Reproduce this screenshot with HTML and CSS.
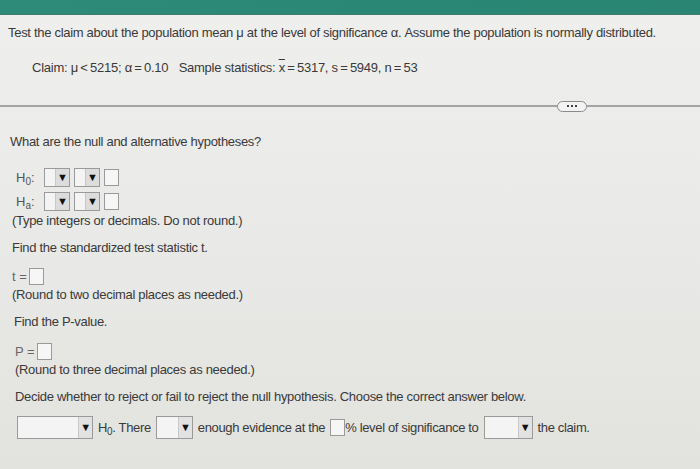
FILE: index.html
```html
<!DOCTYPE html>
<html lang="en">
<head>
<meta charset="UTF-8">
<meta name="viewport" content="width=device-width, initial-scale=1.0">
<title>Hypothesis Test</title>
<link rel="stylesheet" href="styles.css">
</head>
<body>
<div class="topbar"></div>

<div class="question">
    <p class="intro">Test the claim about the population mean <span class="greek">μ</span> at the level of significance <span class="greek">α</span>. Assume the population is normally distributed.</p>
    <p class="claim">Claim: <span class="greek">μ</span>&thinsp;&lt;&thinsp;5215; <span class="greek">α</span>&thinsp;=&thinsp;0.10 <span class="gap"></span>Sample statistics: <span class="xbar">x</span>&thinsp;=&thinsp;5317, s&thinsp;=&thinsp;5949, n&thinsp;=&thinsp;53</p>
</div>

<div class="divider">
    <div class="rule"></div>
    <div class="more"><span></span><span></span><span></span></div>
    <div class="rule short"></div>
</div>

<div class="answer">
    <p class="ask">What are the null and alternative hypotheses?</p>

    <div class="hyp">
        <div class="hyp-row">
            <span class="hyp-label">H<sub>0</sub>:</span>
            <div class="select small"><span class="arrow">▼</span></div>
            <div class="select small"><span class="arrow">▼</span></div>
            <div class="box"></div>
        </div>
        <div class="hyp-row">
            <span class="hyp-label">H<sub>a</sub>:</span>
            <div class="select small"><span class="arrow">▼</span></div>
            <div class="select small"><span class="arrow">▼</span></div>
            <div class="box"></div>
        </div>
    </div>
    <p class="note">(Type integers or decimals. Do not round.)</p>

    <p class="ask find-t">Find the standardized test statistic t.</p>
    <div class="entry t-entry">t = <div class="box"></div></div>
    <p class="note">(Round to two decimal places as needed.)</p>

    <p class="ask find-p">Find the P-value.</p>
    <div class="entry p-entry">P = <div class="box"></div></div>
    <p class="note">(Round to three decimal places as needed.)</p>

    <p class="ask decide">Decide whether to reject or fail to reject the null hypothesis. Choose the correct answer below.</p>
    <div class="sentence">
        <div class="select wide"><span class="arrow">▼</span></div>
        <span>H<sub>0</sub>. There</span>
        <div class="select mid"><span class="arrow">▼</span></div>
        <span>enough evidence at the</span>
        <div class="box pct"></div><span class="tight">% level of significance to</span>
        <div class="select end"><span class="arrow">▼</span></div>
        <span>the claim.</span>
    </div>
</div>
</body>
</html>
```

FILE: styles.css
```css
body {
    margin: 0;
    font-family: "Liberation Sans", Arial, sans-serif;
    font-size: 13px;
    color: #3a3a3a;
    background: linear-gradient(180deg, #efefed 0%, #e8e8e6 60%, #e2e2de 100%);
    width: 700px;
    height: 469px;
    overflow: hidden;
}

p {
    margin: 0;
    line-height: 16px;
}

.topbar {
    height: 14px;
    background: linear-gradient(90deg, #2e8a79 0%, #2b8775 60%, #2a8573 100%);
    border-bottom: 1px solid #3f7d70;
}

.question {
    padding: 10px 0 0 8px;
    height: 75px;
}

.intro {
    letter-spacing: -0.3px;
}

.claim {
    margin-top: 19px;
    margin-left: 24px;
    letter-spacing: -0.25px;
}

.gap {
    display: inline-block;
    width: 7px;
}

.xbar {
    text-decoration: overline;
}

.divider {
    display: flex;
    align-items: center;
    height: 12px;
}

.rule {
    flex: 1;
    height: 2px;
    background: #a4a4a2;
}

.rule.short {
    flex: 0 0 113px;
}

.more {
    width: 28px;
    height: 9px;
    border: 1px solid #8a8a8a;
    border-radius: 6px;
    background: #f3f3f3;
    display: flex;
    justify-content: center;
    align-items: center;
    gap: 2px;
}

.more span {
    width: 2px;
    height: 2px;
    background: #444;
}

.answer {
    padding: 22px 0 0 10px;
}

.ask {
    letter-spacing: -0.3px;
}

.hyp {
    margin-top: 18px;
    margin-left: 6px;
}

.hyp-row {
    display: flex;
    align-items: center;
    gap: 4px;
    height: 19px;
    margin-bottom: 5px;
}

.hyp-label {
    width: 24px;
    color: #555;
}

sub {
    font-size: 10px;
    vertical-align: -3px;
    line-height: 0;
}

.select {
    height: 17px;
    border: 1px solid #9a9a9a;
    background: #f4f4f4;
    display: flex;
    justify-content: flex-end;
    box-sizing: border-box;
}

.select .arrow {
    width: 13px;
    height: 100%;
    background: #dcdcdc;
    border-left: 1px solid #c8c8c8;
    color: #111;
    font-size: 11px;
    line-height: 15px;
    text-align: center;
}

.select.small {
    width: 26px;
    height: 19px;
}

.select.small .arrow {
    line-height: 17px;
}

.box {
    width: 15px;
    height: 17px;
    border: 1px solid #9a9a9a;
    background: #f6f6f6;
    box-sizing: border-box;
}

.note {
    margin-top: -3px;
    margin-left: 2px;
    letter-spacing: -0.3px;
}

.find-t {
    margin-top: 11px;
    margin-left: 2px;
}

.entry {
    display: flex;
    align-items: center;
    gap: 2px;
    height: 17px;
    color: #666;
}

.t-entry {
    margin: 12px 0 5px 2px;
}

.find-p {
    margin-top: 11px;
    margin-left: 4px;
}

.p-entry {
    margin: 13px 0 5px 5px;
}

.p-entry + .note {
    margin-left: 5px;
}

.decide {
    margin-top: 11px;
    margin-left: 5px;
}

.sentence {
    display: flex;
    align-items: center;
    gap: 5px;
    margin: 10px 0 0 7px;
    height: 24px;
    letter-spacing: -0.35px;
}

.select.wide {
    width: 76px;
    height: 23px;
}

.select.mid {
    width: 37px;
    height: 23px;
}

.select.end {
    width: 49px;
    height: 23px;
}

.select.wide .arrow,
.select.mid .arrow,
.select.end .arrow {
    line-height: 21px;
    background: #e2e2e2;
}

.tight {
    margin-left: -5px;
}
```
